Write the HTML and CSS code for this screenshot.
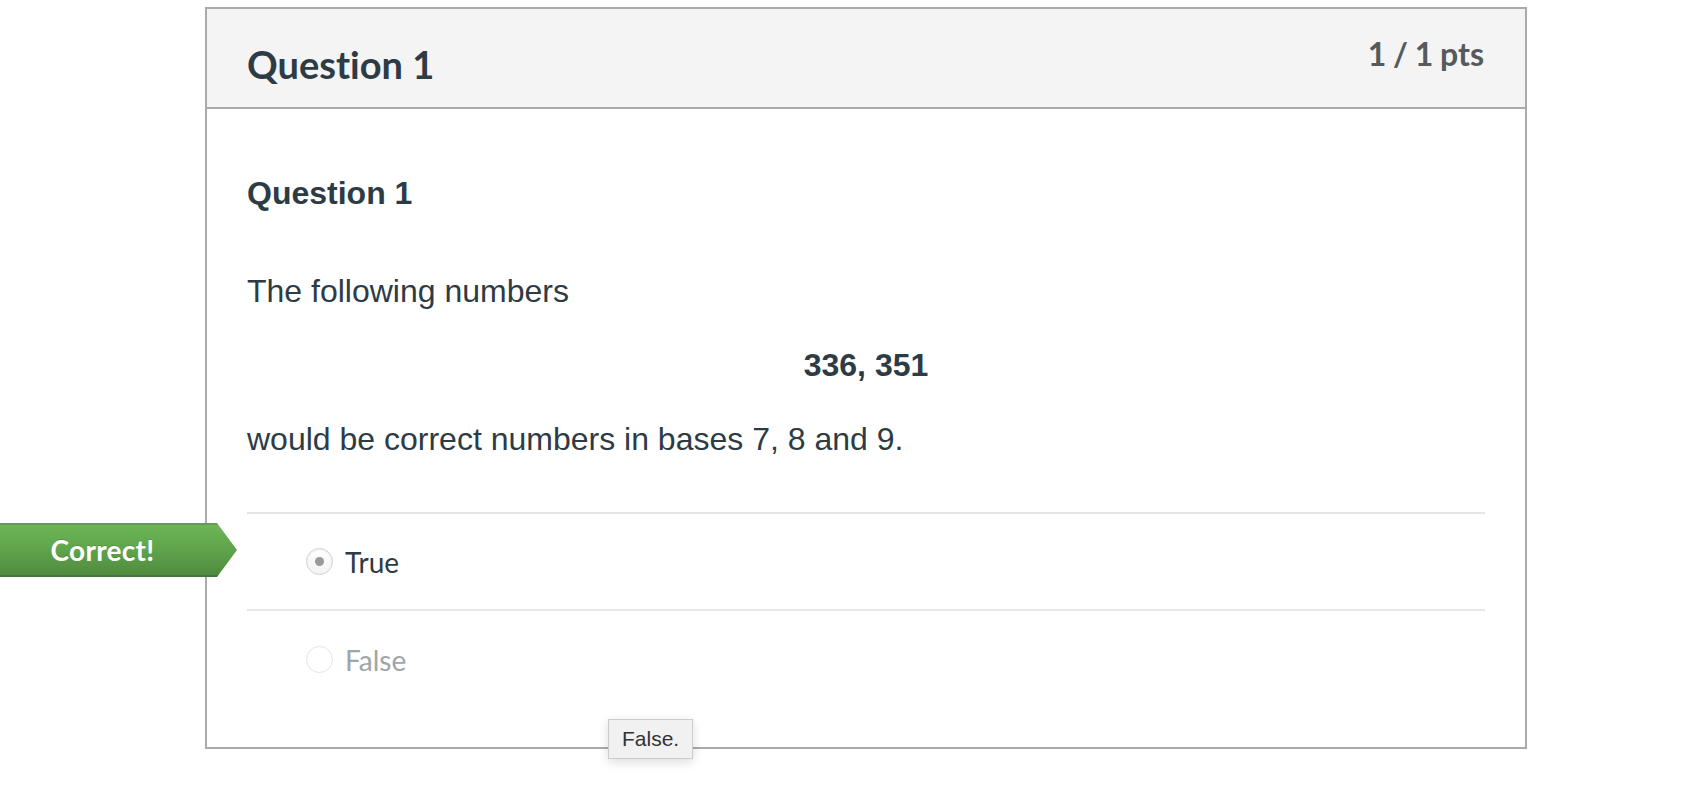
FILE: index.html
```html
<!DOCTYPE html>
<html lang="en">
<head>
<meta charset="utf-8">
<title>Question 1</title>
<link rel="stylesheet" href="styles.css">
</head>
<body>
<div class="page">
  <div class="question">
    <div class="q-header">
      <h2 class="q-name">Question 1</h2>
      <span class="q-points">1 / 1 pts</span>
    </div>
    <div class="q-body">
      <h3 class="q-title">Question 1</h3>
      <p class="q-text">The following numbers</p>
      <p class="q-text q-center"><strong>336, 351</strong></p>
      <p class="q-text">would be correct numbers in bases 7, 8 and 9.</p>
      <div class="answers">
        <div class="answer selected">
          <div class="tag-correct">Correct!</div>
          <span class="radio"><span class="dot"></span></span>
          <span class="answer-text">True</span>
        </div>
        <div class="answer muted">
          <span class="radio"></span>
          <span class="answer-text">False</span>
        </div>
      </div>
    </div>
    <div class="tooltip">False.</div>
  </div>
</div>
</body>
</html>
```

FILE: styles.css
```css
html, body {
  margin: 0;
  padding: 0;
  background: #ffffff;
}

body {
  min-height: 790px;
}

.page {
  padding: 7px 0 0 205px;
}

.question {
  position: relative;
  width: 1318px;
  border: 2px solid #aaaaaa;
  background: #ffffff;
}

.q-header {
  display: flex;
  justify-content: space-between;
  align-items: flex-start;
  height: 100px;
  box-sizing: border-box;
  padding: 0 41px 0 40px;
  background: #f4f4f4;
  border-bottom: 2px solid #aaaaaa;
  font-family: Lato, "Open Sans", sans-serif;
  font-weight: 700;
  font-variant-ligatures: none;
}

.q-name {
  margin: 0;
  padding-top: 28px;
  font-size: 38px;
  line-height: 54px;
  color: #2d3b45;
  font-weight: 700;
}

.q-points {
  padding-top: 27px;
  font-size: 32px;
  line-height: 36px;
  word-spacing: -1px;
  color: #555a5e;
}

.q-body {
  padding: 60px 40px 39px 40px;
  font-family: "Liberation Sans", Arial, sans-serif;
  color: #2d3b45;
}

.q-title {
  margin: 0;
  font-size: 32px;
  line-height: 48px;
  font-weight: 700;
}

.q-text {
  margin: 26px 0 0 0;
  font-size: 32px;
  line-height: 48px;
}

.q-title + .q-text {
  margin-top: 50px;
}

.q-center {
  text-align: center;
}

.answers {
  margin-top: 49px;
  border-top: 2px solid #e6e6e6;
}

.answer {
  position: relative;
  display: flex;
  align-items: center;
  height: 95px;
  padding-left: 59px;
  box-sizing: border-box;
  font-family: Lato, "Open Sans", sans-serif;
  font-size: 28px;
  color: #2d3b45;
}

.answer + .answer {
  height: 99px;
  border-top: 2px solid #e6e6e6;
}

.radio {
  display: flex;
  align-items: center;
  justify-content: center;
  width: 27px;
  height: 27px;
  box-sizing: border-box;
  border-radius: 50%;
  border: 1px solid #d2d2d2;
  background: linear-gradient(#ffffff, #f3f3f3);
  box-shadow: inset 0 1px 2px rgba(0, 0, 0, 0.08);
  margin-right: 12px;
}

.dot {
  width: 9px;
  height: 9px;
  border-radius: 50%;
  background: #9a9a9a;
}

.answer.muted {
  color: #a0a5a9;
}

.answer.muted .radio {
  border-color: #e4e4e4;
  box-shadow: none;
  background: #ffffff;
}

.answer-text {
  line-height: 40px;
}

.tag-correct {
  position: absolute;
  left: -247px;
  top: 9px;
  width: 237px;
  height: 54px;
  box-sizing: border-box;
  padding-right: 32px;
  display: flex;
  align-items: center;
  justify-content: center;
  color: #ffffff;
  font-family: Lato, "Open Sans", sans-serif;
  font-weight: 700;
  font-size: 28px;
  letter-spacing: 0.3px;
  background: linear-gradient(#6db557 0%, #5fa34b 50%, #4f8c3e 100%);
  border-top: 2px solid #6a9a5a;
  border-bottom: 2px solid #44743a;
  clip-path: polygon(0 0, 217px 0, 237px 50%, 217px 100%, 0 100%);
  text-shadow: 0 -1px 0 rgba(0, 0, 0, 0.15);
}

.tooltip {
  position: absolute;
  z-index: 2;
  left: 401px;
  top: 710px;
  padding: 0 13px;
  height: 38px;
  line-height: 38px;
  font-family: "Liberation Sans", Arial, sans-serif;
  font-size: 21px;
  color: #333333;
  background: #f1f1f1;
  border: 1px solid #cccccc;
  box-shadow: 0 3px 10px rgba(0, 0, 0, 0.14);
}
```
